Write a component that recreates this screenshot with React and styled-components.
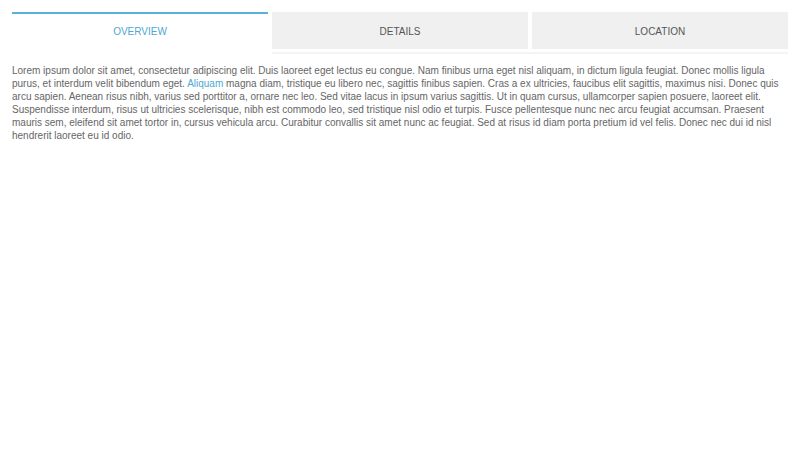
import React, { useState } from 'react';
import styled, { createGlobalStyle } from 'styled-components';

const GlobalStyle = createGlobalStyle`
  body {
    margin: 0;
    background: #ffffff;
    font-family: "Liberation Sans", Arial, sans-serif;
  }
`;

const tabs = ['OVERVIEW', 'DETAILS', 'LOCATION'];

const App = () => {
  const [active, setActive] = useState(0);

  return (
    <>
      <GlobalStyle />
      <Page>
        <TabList>
          {tabs.map((label, i) => (
            <Tab key={label} isActive={i === active} isLast={i === tabs.length - 1} onClick={() => setActive(i)}>
              {label}
            </Tab>
          ))}
        </TabList>
        <Panel>
          Lorem ipsum dolor sit amet, consectetur adipiscing elit. Duis laoreet eget lectus eu congue. Nam finibus urna
          eget nisl aliquam, in dictum ligula feugiat. Donec mollis ligula purus, et interdum velit bibendum eget.{' '}
          <Link href="#">Aliquam</Link> magna diam, tristique eu libero nec, sagittis finibus sapien. Cras a ex
          ultricies, faucibus elit sagittis, maximus nisi. Donec quis arcu sapien. Aenean risus nibh, varius sed
          porttitor a, ornare nec leo. Sed vitae lacus in ipsum varius sagittis. Ut in quam cursus, ullamcorper sapien
          posuere, laoreet elit. Suspendisse interdum, risus ut ultricies scelerisque, nibh est commodo leo, sed
          tristique nisl odio et turpis. Fusce pellentesque nunc nec arcu feugiat accumsan. Praesent mauris sem,
          eleifend sit amet tortor in, cursus vehicula arcu. Curabitur convallis sit amet nunc ac feugiat. Sed at risus
          id diam porta pretium id vel felis. Donec nec dui id nisl hendrerit laoreet eu id odio.
        </Panel>
      </Page>
    </>
  );
};

const Page = styled.div`
  padding: 12px 12px 0 12px;
`;

const TabList = styled.div`
  display: grid;
  grid-template-columns: repeat(3, 1fr);
  gap: 4px;
`;

const Tab = styled.button`
  position: relative;
  height: 37px;
  border: none;
  border-top: 2px solid ${(props) => (props.isActive ? '#5ab0d8' : '#f0f0f0')};
  background-color: ${(props) => (props.isActive ? '#ffffff' : '#f0f0f0')};
  color: ${(props) => (props.isActive ? '#4ea8d2' : '#555555')};
  font-family: "Liberation Sans", Arial, sans-serif;
  font-size: 10px;
  padding: 0 0 1px 0;
  cursor: pointer;

  &::after {
    content: '';
    display: ${(props) => (props.isActive ? 'none' : 'block')};
    position: absolute;
    left: 0;
    right: ${(props) => (props.isLast ? '0' : '-4px')};
    bottom: -5px;
    height: 2px;
    background-color: #f4f4f4;
  }
`;

const Panel = styled.p`
  margin: 15px 0 0 0;
  color: #666666;
  font-size: 10px;
  line-height: 13px;
`;

const Link = styled.a`
  color: #4ea8d2;
  text-decoration: none;
`;

export default App;
